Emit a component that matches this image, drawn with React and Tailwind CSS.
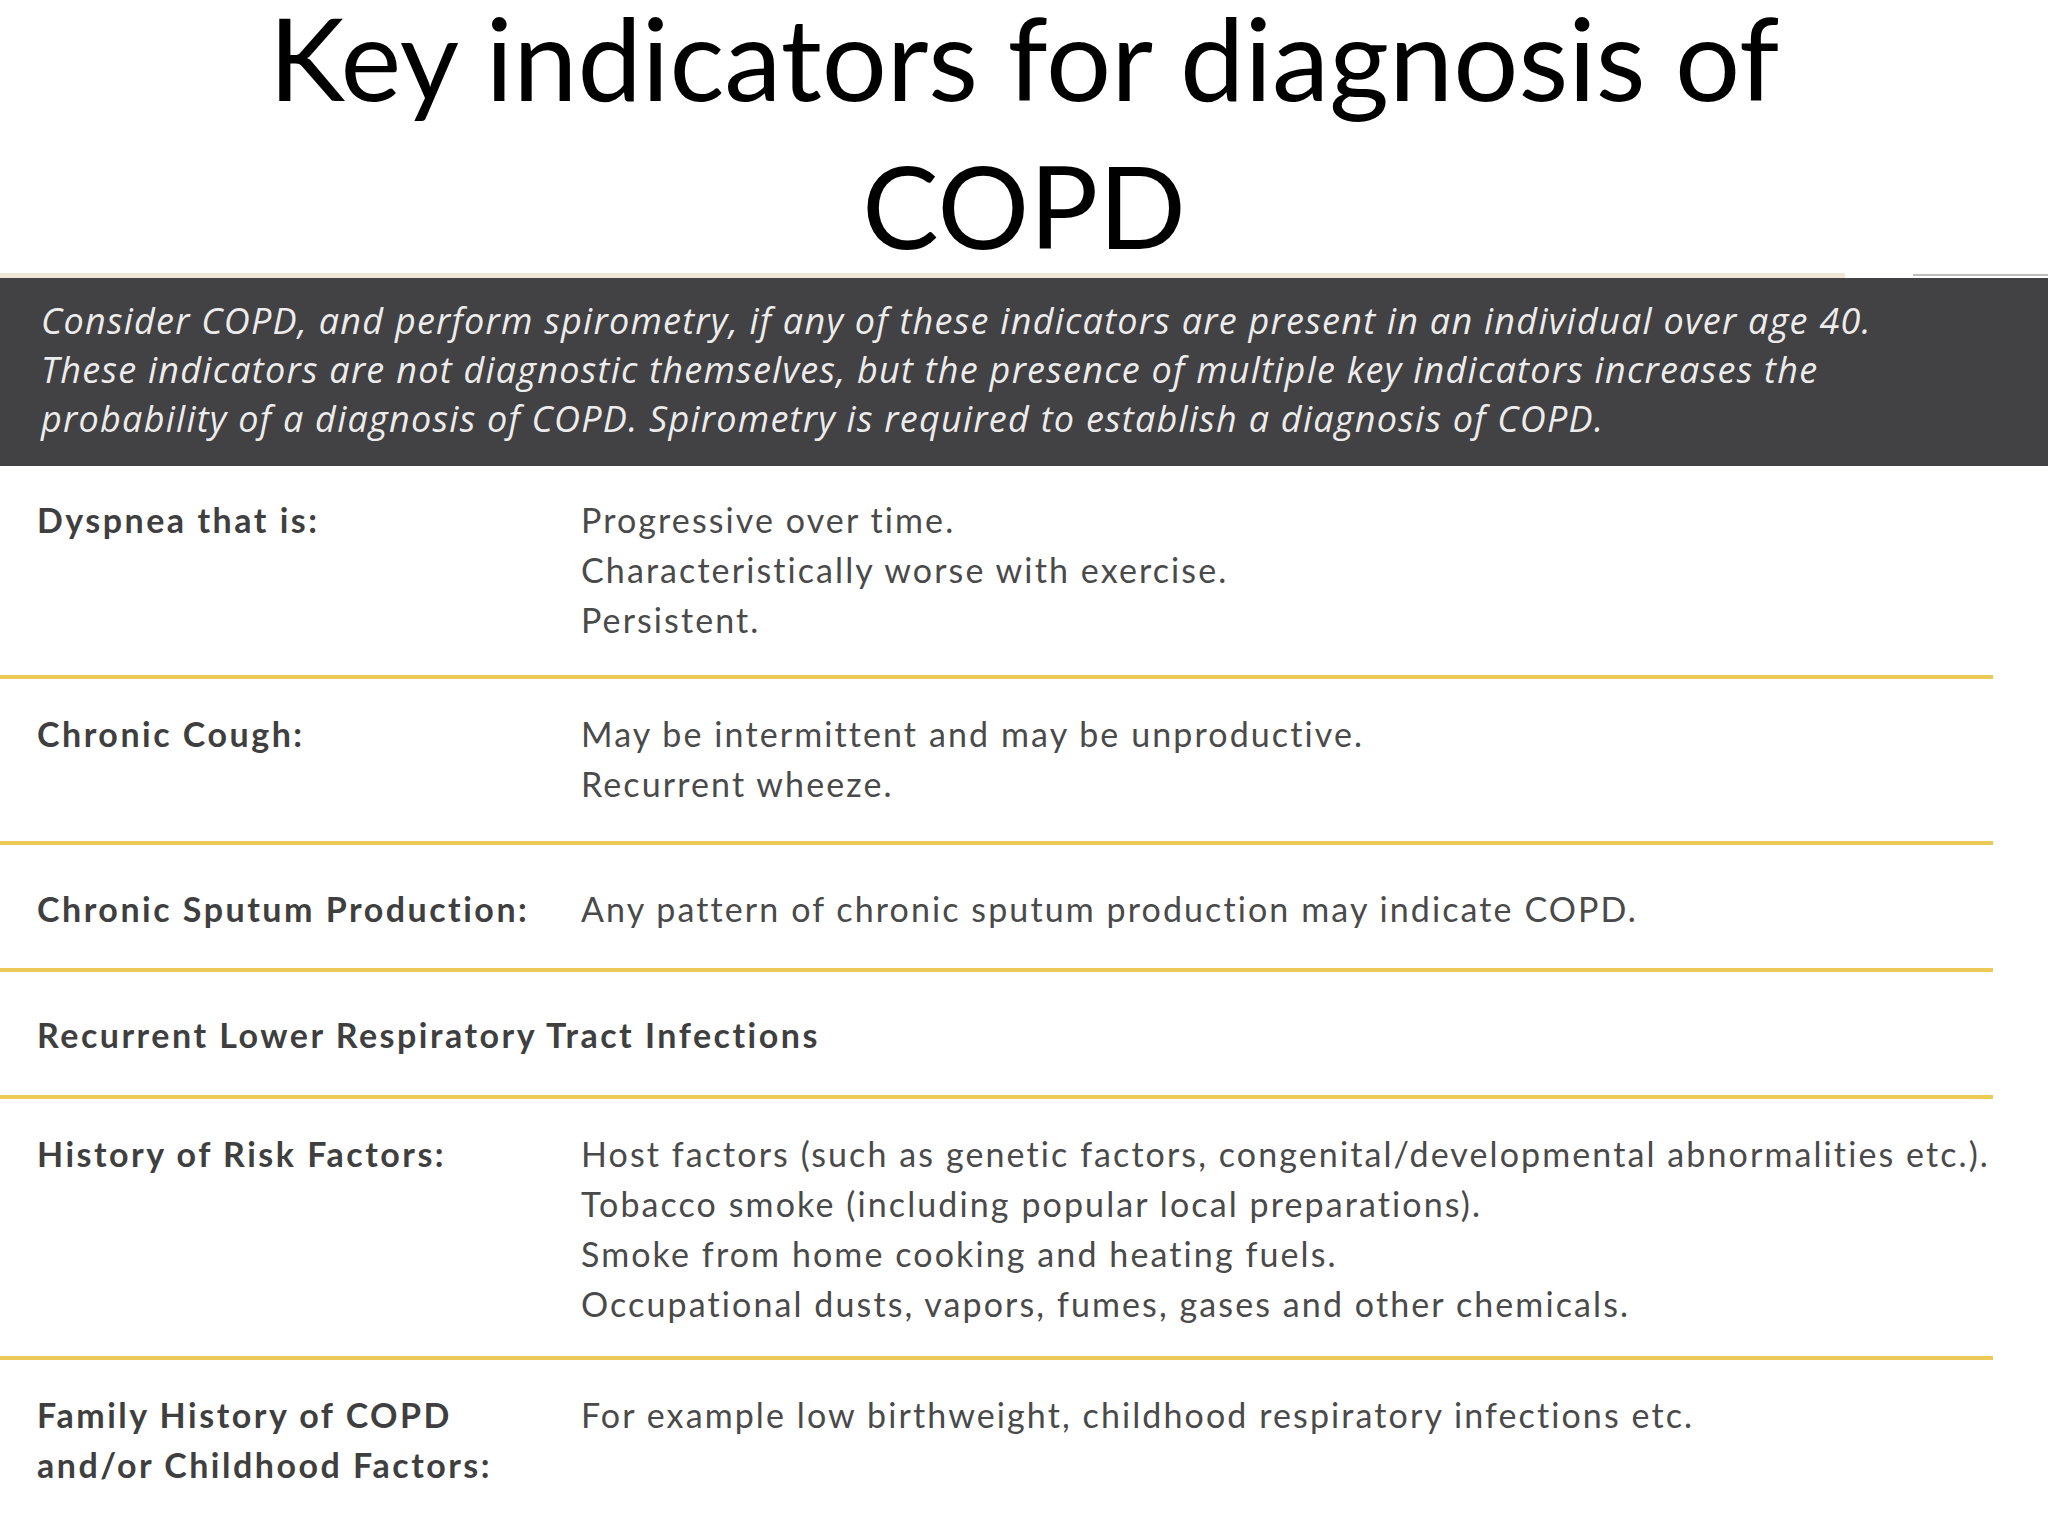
import React from "react";

const rows = [
  {
    label: "Dyspnea that is:",
    lines: ["Progressive over time.", "Characteristically worse with exercise.", "Persistent."],
    pad: "pt-[29px] pb-[30px]",
  },
  {
    label: "Chronic Cough:",
    lines: ["May be intermittent and may be unproductive.", "Recurrent wheeze."],
    pad: "pt-[30px] pb-[32px]",
  },
  {
    label: "Chronic Sputum Production:",
    lines: ["Any pattern of chronic sputum production may indicate COPD."],
    pad: "pt-[39px] pb-[34px]",
  },
  {
    label: "Recurrent Lower Respiratory Tract Infections",
    lines: [],
    pad: "pt-[38px] pb-[35px]",
  },
  {
    label: "History of Risk Factors:",
    lines: [
      "Host factors (such as genetic factors, congenital/developmental abnormalities etc.).",
      "Tobacco smoke (including popular local preparations).",
      "Smoke from home cooking and heating fuels.",
      "Occupational dusts, vapors, fumes, gases and other chemicals.",
    ],
    pad: "pt-[30px] pb-[27px]",
  },
  {
    label: (
      <>
        Family History of COPD
        <br />
        and/or Childhood Factors:
      </>
    ),
    lines: ["For example low birthweight, childhood respiratory infections etc."],
    pad: "pt-[30px] pb-[20px]",
    last: true,
  },
];

const Row = ({ row }) => (
  <div
    className={`flex ${row.pad} ${row.last ? "" : "border-b-4 border-[#ebcb55]"}`}
  >
    <div
      className={`pl-[37px] font-bold tracking-[2.5px] text-[#3f3f3f] ${row.lines.length ? "w-[581px] shrink-0" : ""}`}
    >
      {row.label}
    </div>
    {row.lines.length > 0 && (
      <div className="whitespace-nowrap tracking-[2.1px] text-[#4a4a4a]">
        {row.lines.map((l, i) => (
          <div key={i}>{l}</div>
        ))}
      </div>
    )}
  </div>
);

export default function App() {
  return (
    <div className="w-[2048px] h-[1536px] bg-white overflow-hidden">
      {/* title */}
      <h1 className="h-[273px] text-center text-[115px] leading-[112px] text-black font-['Lato',sans-serif]">
        <div>Key indicators for diagnosis of</div>
        <div className="mt-[36px]">COPD</div>
      </h1>

      {/* thin rules over the banner */}
      <div className="flex h-[5px]">
        <div className="w-[1845px] bg-[#efe6d6]" />
        <div className="w-[68px]" />
        <div className="flex-1 pt-[1px]">
          <div className="h-[2px] bg-[#bdbdbd]" />
        </div>
      </div>

      {/* dark banner */}
      <div className="bg-[#424143] h-[188px] pt-[18px] pl-[41px] text-[36px] leading-[49px] tracking-[1.25px] italic text-[#ececec] font-['Open_Sans',sans-serif]">
        Consider COPD, and perform spirometry, if any of these indicators are present in an individual over age 40.
        <br />
        These indicators are not diagnostic themselves, but the presence of multiple key indicators increases the
        <br />
        probability of a diagnosis of COPD. Spirometry is required to establish a diagnosis of COPD.
      </div>

      {/* indicator table */}
      <div className="w-[1993px] text-[34px] leading-[50px] font-['Lato',sans-serif]">
        {rows.map((r, i) => (
          <Row key={i} row={r} />
        ))}
      </div>
    </div>
  );
}
